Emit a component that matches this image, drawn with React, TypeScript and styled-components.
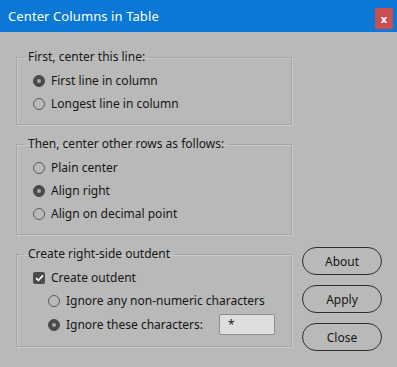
import React from "react";
import styled, { createGlobalStyle } from "styled-components";

const Global = createGlobalStyle`
  html, body { margin: 0; padding: 0; background: #b9b9b9; }
  body { font-family: "Noto Sans", "Open Sans", sans-serif; font-size: 12px; color: #161616; }
  * { box-sizing: border-box; }
`;

const Window = styled.div`
  width: 397px;
  height: 367px;
  background: #b9b9b9;
  display: flex;
  flex-direction: column;
`;

const TitleBar = styled.div`
  height: 32px;
  background: #0a78d4;
  display: flex;
  align-items: center;
  justify-content: space-between;
  padding: 0 4px 0 8px;
`;

const Title = styled.div`
  color: #fff;
  font-size: 13px;
  letter-spacing: 0.1px;
`;

const CloseBox = styled.div`
  width: 18px;
  height: 21px;
  background: #c84f52;
  color: #fff;
  font-size: 11px;
  font-weight: bold;
  display: flex;
  align-items: center;
  justify-content: center;
  margin-top: 5px;
`;

const Body = styled.div`
  padding: 17px 0 0 16px;
  display: flex;
  flex-direction: column;
  gap: 11px;
`;

const Group = styled.fieldset<{ $width?: number }>`
  margin: 0;
  width: ${(p) => p.$width ?? 276}px;
  padding: 4px 0 9px 16px;
  border: 1px solid #a6a6a6;
  box-shadow: inset 1px 1px 0 #c9c9c9, 1px 1px 0 #c9c9c9;
  display: flex;
  flex-direction: column;
`;

const Legend = styled.legend`
  padding: 0 4px;
  margin-left: -9px;
  line-height: 16px;
  font-size: 12px;
`;

const Row = styled.label<{ $indent?: number; $tall?: boolean }>`
  display: flex;
  align-items: center;
  height: ${(p) => (p.$tall ? 25 : 23)}px;
  padding-left: ${(p) => p.$indent ?? 0}px;
  gap: 6px;
`;

const Radio = styled.span<{ $on?: boolean }>`
  width: 12px;
  height: 12px;
  border-radius: 50%;
  flex: none;
  border: 1px solid ${(p) => (p.$on ? "#4a4a4a" : "#5a5a5a")};
  background: ${(p) => (p.$on ? "#4a4a4a" : "transparent")};
  display: flex;
  align-items: center;
  justify-content: center;
  &::after {
    content: "";
    width: 4px;
    height: 4px;
    border-radius: 50%;
    background: ${(p) => (p.$on ? "#a8a8a8" : "transparent")};
  }
`;

const Check = styled.span`
  width: 12px;
  height: 12px;
  border-radius: 2px;
  background: #4c4c4c;
  flex: none;
  display: flex;
  align-items: center;
  justify-content: center;
`;

const TextBox = styled.div`
  width: 56px;
  height: 21px;
  margin-left: 10px;
  background: #dedede;
  border: 1px solid #8e8e8e;
  border-radius: 2px;
  padding: 1px 0 0 8px;
  font-size: 12px;
`;

const BottomRow = styled.div`
  display: flex;
  gap: 10px;
  align-items: flex-start;
`;

const Buttons = styled.div`
  margin-top: 1px;
  display: flex;
  flex-direction: column;
  gap: 10px;
`;

const PillButton = styled.button`
  width: 80px;
  height: 28px;
  border-radius: 14px;
  border: 1px solid #2e2e2e;
  background: transparent;
  font-family: inherit;
  font-size: 12px;
  color: #161616;
  padding: 0;
`;

export default function App() {
  return (
    <>
      <Global />
      <Window>
        <TitleBar>
          <Title>Center Columns in Table</Title>
          <CloseBox>x</CloseBox>
        </TitleBar>
        <Body>
          <Group>
            <Legend>First, center this line:</Legend>
            <Row><Radio $on />First line in column</Row>
            <Row><Radio />Longest line in column</Row>
          </Group>
          <Group>
            <Legend>Then, center other rows as follows:</Legend>
            <Row><Radio />Plain center</Row>
            <Row><Radio $on />Align right</Row>
            <Row><Radio />Align on decimal point</Row>
          </Group>
          <BottomRow>
            <Group>
              <Legend>Create right-side outdent</Legend>
              <Row>
                <Check>
                  <svg width="9" height="8" viewBox="0 0 9 8">
                    <path d="M1 4.2 L3.4 6.4 L8 1.4" stroke="#fff" strokeWidth="1.6" fill="none" />
                  </svg>
                </Check>
                Create outdent
              </Row>
              <Row $indent={15}><Radio />Ignore any non-numeric characters</Row>
              <Row $indent={15} $tall>
                <Radio $on />Ignore these characters:
                <TextBox>*</TextBox>
              </Row>
            </Group>
            <Buttons>
              <PillButton>About</PillButton>
              <PillButton>Apply</PillButton>
              <PillButton>Close</PillButton>
            </Buttons>
          </BottomRow>
        </Body>
      </Window>
    </>
  );
}
